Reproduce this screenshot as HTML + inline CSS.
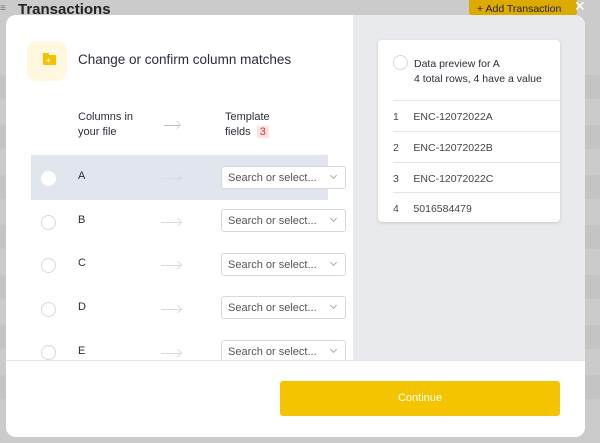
<!DOCTYPE html>
<html><head><meta charset="utf-8"><style>
*{box-sizing:border-box;margin:0;padding:0}
body{width:600px;height:443px;overflow:hidden;background:#cbcbcb;font-family:"Liberation Sans",sans-serif;position:relative;color:#2a2e38}
.abs{position:absolute}
.stripe{position:absolute;left:0;width:600px;height:24px;background:#c4c4c4}
.modal{position:absolute;left:6px;top:15px;width:579px;height:422px;background:#fff;border-radius:10px;overflow:hidden}
.right{position:absolute;left:347px;top:0;width:232px;height:345px;background:#e9eaee}
.footer{position:absolute;left:0;top:345px;width:579px;height:77px;background:#fff;border-top:1px solid #e3e4e8}
.radio{position:absolute;width:15px;height:15px;border-radius:50%;border:1px solid #d6d8de;background:#fff}
.sel{position:absolute;left:215px;width:125px;height:23px;border:1px solid #d6d8de;border-radius:3px;background:#fff;font-size:11px;color:#555;padding:5px 0 0 6px}
.sel:after{content:"";position:absolute;right:9px;top:6px;width:4px;height:4px;border-right:1px solid #aaa;border-bottom:1px solid #aaa;transform:rotate(45deg)}
.lbl{position:absolute;left:72px;font-size:11px}
.arr{position:absolute;left:155px;width:20px;height:1px;background:#d8dae0}
.arr:after{content:"";position:absolute;right:0;top:-3px;width:5px;height:5px;border-right:1px solid #d8dae0;border-top:1px solid #d8dae0;transform:rotate(45deg)}
.card{position:absolute;left:372px;top:25px;width:182px;height:182px;background:#fff;border-radius:4px;box-shadow:0 1px 3px rgba(0,0,0,.15)}
.row{position:absolute;left:15px;right:0;height:31px;border-top:1px solid #e3e4e8;font-size:10.5px;color:#444;padding-top:10px}
</style></head><body>
<div class="stripe" style="top:75px"></div><div class="stripe" style="top:125px"></div><div class="stripe" style="top:175px"></div><div class="stripe" style="top:225px"></div><div class="stripe" style="top:275px"></div><div class="stripe" style="top:325px"></div><div class="stripe" style="top:375px"></div>
<div class="abs" style="left:0;top:3px;font-size:10px;color:#777">≡</div>
<div class="abs" style="left:18px;top:1px;font-size:15px;font-weight:bold;color:#222">Transactions</div>
<div class="abs" style="left:469px;top:0;width:108px;height:17px;background:#ddaa00;border-radius:0 0 5px 5px;font-size:10.5px;padding:3px 0 0 8px;color:#222">+ Add Transaction</div>
<div class="abs" style="left:574px;top:-2px;font-size:14px;color:#fff">✕</div>
<div class="modal">
 <div class="right"></div>
 <div class="abs" style="left:21px;top:26px;width:40px;height:40px;border-radius:10px;background:#fff8df"></div>
 <div class="abs" style="left:37px;top:40px;width:13px;height:10px;background:#f5c000;border-radius:1px"></div>
 <div class="abs" style="left:37px;top:38px;width:6px;height:3px;background:#f5c000"></div>
 <div class="abs" style="left:40px;top:41px;font-size:8px;color:#fff;font-weight:bold">+</div>
 <div class="abs" style="left:72px;top:37px;font-size:13.5px">Change or confirm column matches</div>
 <div class="abs" style="left:72px;top:95px;font-size:11px;line-height:15px">Columns in<br>your file</div>
 <div class="arr" style="left:158px;top:110px;width:16px;background:#bbb"></div>
 <div class="abs" style="left:219px;top:95px;font-size:11px;line-height:15px">Template<br>fields <span style="background:#fde2e2;color:#d33;padding:0 3px;margin-left:3px">3</span></div>
 <div class="abs" style="left:25px;top:140px;width:297px;height:45px;background:#e1e6ee"></div>
 <div class="radio" style="left:35px;top:156px;border-color:#fff"></div><div class="lbl" style="top:155px">A</div><div class="arr" style="top:163px"></div><div class="sel" style="top:151px">Search or select...</div>
 <div class="radio" style="left:35px;top:200px"></div><div class="lbl" style="top:199px">B</div><div class="arr" style="top:207px"></div><div class="sel" style="top:194px">Search or select...</div>
 <div class="radio" style="left:35px;top:243px"></div><div class="lbl" style="top:242px">C</div><div class="arr" style="top:250px"></div><div class="sel" style="top:238px">Search or select...</div>
 <div class="radio" style="left:35px;top:287px"></div><div class="lbl" style="top:286px">D</div><div class="arr" style="top:294px"></div><div class="sel" style="top:281px">Search or select...</div>
 <div class="radio" style="left:35px;top:330px"></div><div class="lbl" style="top:330px">E</div><div class="arr" style="top:338px"></div><div class="sel" style="top:325px">Search or select...</div>
 <div class="card">
  <div class="radio" style="left:15px;top:15px"></div>
  <div class="abs" style="left:36px;top:17px;font-size:10.5px;line-height:15px">Data preview for A<br>4 total rows, 4 have a value</div>
  <div class="row" style="top:60px">1&nbsp;&nbsp;&nbsp;&nbsp;&nbsp;ENC-12072022A</div>
  <div class="row" style="top:91px">2&nbsp;&nbsp;&nbsp;&nbsp;&nbsp;ENC-12072022B</div>
  <div class="row" style="top:122px">3&nbsp;&nbsp;&nbsp;&nbsp;&nbsp;ENC-12072022C</div>
  <div class="row" style="top:152px">4&nbsp;&nbsp;&nbsp;&nbsp;&nbsp;5016584479</div>
 </div>
 <div class="footer">
  <div class="abs" style="left:274px;top:20px;width:280px;height:35px;background:#f5c400;border-radius:3px;color:#fff;font-size:11px;text-align:center;padding-top:11px">Continue</div>
 </div>
</div>
</body></html>
